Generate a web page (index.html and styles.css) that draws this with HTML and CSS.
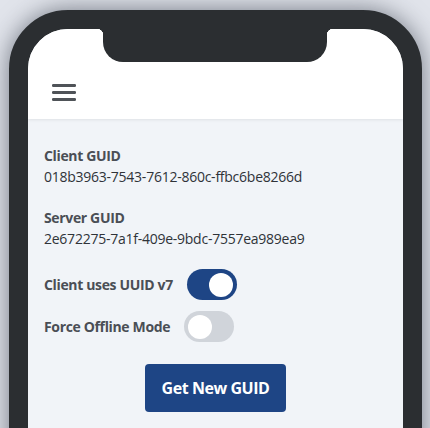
FILE: index.html
```html
<!DOCTYPE html>
<html lang="en">
<head>
  <meta charset="UTF-8" />
  <meta name="viewport" content="width=device-width, initial-scale=1" />
  <title>GUID Demo</title>
  <link rel="stylesheet" href="styles.css">
</head>
<body>
  <div class="phone">
    <div class="notch"></div>

    <header class="top-bar">
      <button class="menu-btn" aria-label="Open menu">
        <svg width="24" height="17" viewBox="0 0 24 17">
          <rect x="0" y="0" width="24" height="3" rx="1.2" />
          <rect x="0" y="7" width="24" height="3" rx="1.2" />
          <rect x="0" y="14" width="24" height="3" rx="1.2" />
        </svg>
      </button>
    </header>

    <main class="content">
      <div class="field">
        <div class="field-label">Client GUID</div>
        <div class="field-value">018b3963-7543-7612-860c-ffbc6be8266d</div>
      </div>

      <div class="field">
        <div class="field-label">Server GUID</div>
        <div class="field-value">2e672275-7a1f-409e-9bdc-7557ea989ea9</div>
      </div>

      <label class="switch-row">
        <span class="field-label">Client uses UUID v7</span>
        <span class="switch on"><span class="knob"></span></span>
      </label>

      <label class="switch-row">
        <span class="field-label">Force Offline Mode</span>
        <span class="switch"><span class="knob"></span></span>
      </label>

      <div class="actions">
        <button class="btn">Get New GUID</button>
      </div>
    </main>
  </div>
</body>
</html>
```

FILE: styles.css
```css
:root {
  --frame: #2b2e31;
  --primary: #1e4585;
  --label: #4a4e55;
  --text: #2f3338;
  --screen-bg: #f1f4f8;
}

html, body {
  height: 100%;
}

body {
  margin: 0;
  background: #e1e4eb;
  font-family: "Open Sans", "Noto Sans", sans-serif;
  overflow: hidden;
}

.phone {
  position: relative;
  margin: 10px 0 0 9px;
  width: 375px;
  height: 820px;
  border: 19px solid var(--frame);
  border-radius: 59px;
  overflow: hidden;
  background: var(--screen-bg);
  box-shadow: 0 0 24px rgba(40, 46, 60, 0.6);
}

/* camera notch over the top of the screen */
.notch {
  position: absolute;
  top: 0;
  left: 75px;
  width: 224px;
  height: 33px;
  background: var(--frame);
  border-radius: 0 0 20px 20px;
  z-index: 2;
}

.notch::before,
.notch::after {
  content: "";
  position: absolute;
  top: 0;
  width: 6px;
  height: 6px;
}

.notch::before {
  left: -6px;
  background: radial-gradient(circle at 0 100%, transparent 6px, var(--frame) 6.5px);
}

.notch::after {
  right: -6px;
  background: radial-gradient(circle at 100% 100%, transparent 6px, var(--frame) 6.5px);
}

.top-bar {
  height: 90px;
  box-sizing: border-box;
  padding: 36px 24px 0;
  display: flex;
  align-items: center;
  background: #fff;
  box-shadow: 0 1px 3px rgba(0, 0, 0, 0.08);
  position: relative;
  z-index: 1;
}

.menu-btn {
  background: none;
  border: 0;
  padding: 0;
  display: flex;
  cursor: pointer;
}

.menu-btn svg {
  fill: #4f5358;
}

.content {
  padding: 26px 16px 0;
}

.field {
  margin-bottom: 20px;
  font-size: 14px;
  line-height: 21px;
}

.field-label {
  font-weight: 700;
  color: var(--label);
  font-size: 14px;
  letter-spacing: -0.35px;
}

.field-value {
  color: var(--text);
  letter-spacing: -0.25px;
}

.switch-row {
  display: flex;
  align-items: center;
  gap: 14px;
  margin-bottom: 11px;
  cursor: pointer;
}

.switch {
  position: relative;
  width: 50px;
  height: 31px;
  border-radius: 16px;
  background: #d0d4da;
}

.switch .knob {
  position: absolute;
  top: 3.5px;
  left: 4px;
  width: 24px;
  height: 24px;
  border-radius: 50%;
  background: #fff;
}

.switch.on {
  background: var(--primary);
}

.switch.on .knob {
  left: 22px;
}

.actions {
  display: flex;
  justify-content: center;
  margin-top: 22px;
}

.btn {
  height: 48px;
  padding: 0 17px;
  border: 0;
  border-radius: 4px;
  background: var(--primary);
  color: #fff;
  font-family: inherit;
  font-size: 16px;
  font-weight: 700;
  letter-spacing: -0.45px;
  cursor: pointer;
}
```
